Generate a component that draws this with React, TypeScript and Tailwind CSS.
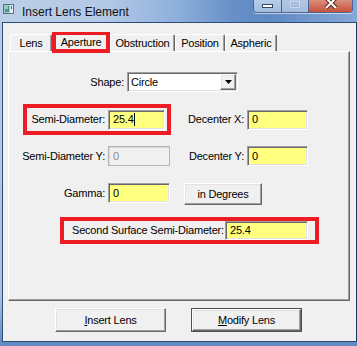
import React from 'react';

// поля ввода в стиле Windows Classic (утопленная рамка)
const sunken =
  'border border-t-[#a0a0a0] border-l-[#a0a0a0] border-b-white border-r-white shadow-[inset_1px_1px_0_#696969,inset_-1px_-1px_0_#e3e3e3]';
const raised =
  'border border-t-white border-l-white border-b-[#696969] border-r-[#696969] shadow-[inset_-1px_-1px_0_#a0a0a0,inset_1px_1px_0_#e3e3e3]';

const Field = ({ value, width, height = 20, cursor = false }: { value: string; width: number; height?: number; cursor?: boolean }) => (
  <div
    className={`${sunken} bg-[#ffff80] flex items-center pl-[4px] shrink-0`}
    style={{ width, height }}
  >
    <span>{value}</span>
    {cursor && <span className="w-px h-[13px] bg-black" />}
  </div>
);

const Tab = ({ label, width }: { label: string; width: number }) => (
  <div
    className="h-[17px] flex items-center justify-center border-t border-l border-t-white border-l-white border-r border-r-[#696969] shadow-[inset_-1px_0_0_#a0a0a0] rounded-t-[2px]"
    style={{ width }}
  >
    {label}
  </div>
);

const WinButton = ({ children, isDefault = false }: { children: React.ReactNode; isDefault?: boolean }) => (
  <div className={`w-[111px] h-[24px] ${isDefault ? 'border border-[#505050]' : ''}`}>
    <div className={`${raised} w-full h-full flex items-center justify-center bg-[#f0f0f0]`}>{children}</div>
  </div>
);

export default function App() {
  return (
    <div className="w-[357px] h-[346px] flex flex-col bg-[linear-gradient(180deg,#b9cde8_0%,#a9c2e3_85%,#5f88c2_100%)] font-['Liberation_Sans',Arial,sans-serif] text-[11px] tracking-[-0.2px] text-black overflow-hidden whitespace-nowrap">
      {/* Заголовок окна */}
      <div className="h-[22px] shrink-0 flex items-start bg-[linear-gradient(90deg,#bccfe8_0%,#b2c8e6_30%,#8dafdc_50%,#6890c8_65%,#5f89c4_75%,#86a8d8_100%)]">
        <svg width="11" height="10" viewBox="0 0 11 10" className="ml-[3px] mt-[4px] shrink-0">
          <rect x="0.5" y="0.5" width="10" height="9" fill="#e8eef4" stroke="#5a6f86" />
          <rect x="1.5" y="1.5" width="5" height="7" fill="#4f9a8e" />
          <rect x="2" y="2" width="3" height="3" fill="#8fd0c4" />
          <rect x="8" y="2" width="1" height="3" fill="#3b7a54" />
        </svg>
        <span className="ml-[8px] mt-[3px] text-[12px] tracking-normal text-[#111]">Insert Lens Element</span>
        <div className="ml-auto mr-[4px] shrink-0 flex h-[13px] rounded-b-[4px] border border-t-0 border-[#4a6590] overflow-hidden shadow-[0_1px_0_rgba(255,255,255,0.6)]">
          <div className="w-[28px] shrink-0 bg-[linear-gradient(180deg,#b9cde8,#a3bcdf)] border-r border-[#4a6590] flex items-start justify-center">
            <div className="mt-[4px] w-[11px] h-[4px] bg-white border border-[#334a6b]" />
          </div>
          <div className="w-[27px] shrink-0 bg-[linear-gradient(180deg,#b3c7e3,#a4bbdc)] border-r border-[#4a6590] flex items-start justify-center">
            <div className="mt-[1px] w-[10px] h-[7px] border border-[#c9d8ec] shadow-[inset_0_0_0_1px_#9fb6d8]" />
          </div>
          <div className="w-[43px] shrink-0 bg-[linear-gradient(180deg,#d98f7e,#c8513c)] flex items-start justify-center">
            <svg width="14" height="9" viewBox="0 0 14 9">
              <path d="M2 -2 L12 8 M12 -2 L2 8" stroke="#4b1a12" strokeWidth="4" />
              <path d="M2 -2 L12 8 M12 -2 L2 8" stroke="#ffffff" strokeWidth="2.2" />
            </svg>
          </div>
        </div>
      </div>

      {/* Клиентская область */}
      <div className="flex-1 ml-[2px] mb-[4px] border border-[#2f4c74] border-r-[#1e3a63] bg-[#f0f0f0] flex flex-col">
        {/* Вкладки */}
        <div className="flex items-end ml-[7px] mt-[9px] h-[19px]">
          <Tab label="Lens" width={42} />
          <div className="relative z-10 -mb-[2px] w-[58px] h-[21px] border-[4px] border-[#ed1c24] border-t-[3px] bg-[#f0f0f0] flex items-start justify-center leading-[12px] pt-[1px]">
            Aperture
          </div>
          <Tab label="Obstruction" width={65} />
          <Tab label="Position" width={50} />
          <Tab label="Aspheric" width={52} />
        </div>

        {/* Панель вкладки */}
        <div className="ml-[5px] w-[342px] h-[250px] border border-t-white border-l-white border-b-[#696969] border-r-[#696969] shadow-[inset_-1px_-1px_0_#a0a0a0] flex flex-col">
          {/* Shape */}
          <div className="flex items-center mt-[20px]">
            <div className="w-[115px] text-right">Shape:</div>
            <div className={`${sunken} ml-[3px] w-[111px] h-[20px] bg-white flex items-center pl-[3px]`}>
              <span className="flex-1">Circle</span>
              <div className={`${raised} w-[16px] h-[16px] mr-[1px] bg-[#f0f0f0] flex items-center justify-center`}>
                <svg width="7" height="4" viewBox="0 0 7 4">
                  <path d="M0 0 H7 L3.5 4 Z" fill="#000" />
                </svg>
              </div>
            </div>
          </div>

          {/* Semi-Diameter / Decenter X */}
          <div className="flex items-center mt-[12px]">
            <div className="ml-[14px] w-[148px] h-[31px] border-[4px] border-[#ed1c24] flex items-center">
              <div className="w-[78px] text-right">Semi-Diameter:</div>
              <div className="ml-[3px]">
                <Field value="25.4" width={57} cursor />
              </div>
            </div>
            <div className="w-[73px] text-right">Decenter X:</div>
            <div className="ml-[3px]">
              <Field value="0" width={61} />
            </div>
          </div>

          {/* Semi-Diameter Y / Decenter Y */}
          <div className="flex items-center mt-[11px]">
            <div className="w-[96px] text-right">Semi-Diameter Y:</div>
            <div className="ml-[3px] w-[62px] h-[20px] border border-[#b5b5b5] shadow-[inset_1px_1px_0_#d8d8d8] bg-[#f0f0f0] flex items-center pl-[4px] text-[#8a8a8a]">
              0
            </div>
            <div className="w-[74px] text-right">Decenter Y:</div>
            <div className="ml-[3px]">
              <Field value="0" width={61} />
            </div>
          </div>

          {/* Gamma */}
          <div className="flex items-start mt-[17px]">
            <div className="w-[96px] text-right h-[20px] leading-[20px]">Gamma:</div>
            <div className="ml-[3px]">
              <Field value="0" width={62} />
            </div>
            <div className={`${raised} ml-[14px] w-[78px] h-[22px] flex items-center justify-center`}>in Degrees</div>
          </div>

          {/* Second Surface Semi-Diameter */}
          <div className="ml-[51px] mt-[12px] w-[259px] h-[27px] border-[4px] border-[#ed1c24] flex items-center pl-[8px]">
            <div className="flex-1">Second Surface Semi-Diameter:</div>
            <div className="mr-[7px]">
              <Field value="25.4" width={83} height={19} />
            </div>
          </div>
        </div>

        {/* Кнопки */}
        <div className="flex mt-[7px] ml-[52px] gap-[25px]">
          <WinButton>
            <span>
              <span className="underline">I</span>nsert Lens
            </span>
          </WinButton>
          <WinButton isDefault>
            <span>
              <span className="underline">M</span>odify Lens
            </span>
          </WinButton>
        </div>
      </div>
    </div>
  );
}
